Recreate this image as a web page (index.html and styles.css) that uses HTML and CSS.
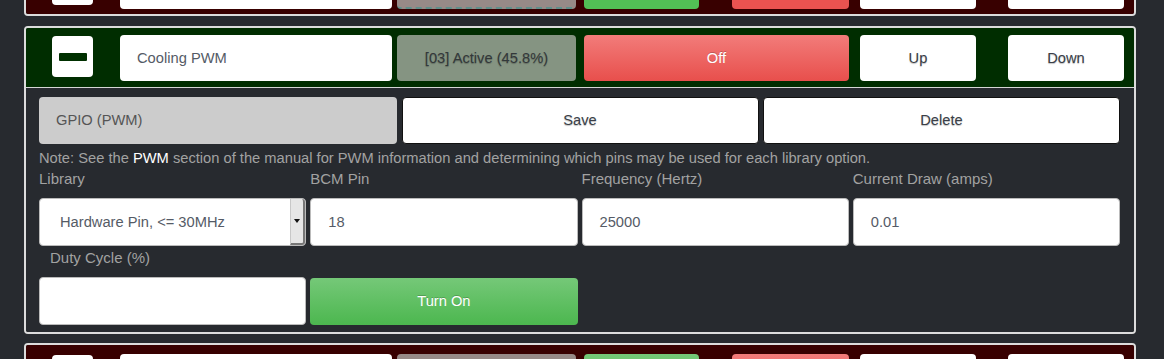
FILE: index.html
```html
<!DOCTYPE html>
<html>
<head>
<meta charset="utf-8">
<link rel="stylesheet" href="styles.css">
</head>
<body>
<div class="list">
  <div class="panel panel-off">
    <div class="head">
      <div class="tog"><span class="bar"></span></div>
      <div class="name"></div>
      <div class="status status-off"></div>
      <div class="btn btn-on-s"></div>
      <div class="btn btn-red-s"></div>
      <div class="btn btn-white up"></div>
      <div class="btn btn-white down"></div>
    </div>
  </div>

  <div class="panel panel-on">
    <div class="head">
      <div class="tog"><span class="bar"></span></div>
      <div class="name">Cooling PWM</div>
      <div class="status status-on">[03] Active (45.8%)</div>
      <div class="btn btn-red off">Off</div>
      <div class="btn btn-white up">Up</div>
      <div class="btn btn-white down">Down</div>
    </div>
    <div class="body">
      <div class="row3">
        <div class="type">GPIO (PWM)</div>
        <div class="btn btn-white bordered">Save</div>
        <div class="btn btn-white bordered">Delete</div>
      </div>
      <div class="note">Note: See the <span class="link">PWM</span> section of the manual for PWM information and determining which pins may be used for each library option.</div>
      <div class="row4 labels">
        <div>Library</div>
        <div>BCM Pin</div>
        <div>Frequency (Hertz)</div>
        <div>Current Draw (amps)</div>
      </div>
      <div class="row4 inputs">
        <div class="field select">Hardware Pin, &lt;= 30MHz<span class="arrow"><span class="tri"></span></span></div>
        <div class="field">18</div>
        <div class="field">25000</div>
        <div class="field">0.01</div>
      </div>
      <div class="duty-label">Duty Cycle (%)</div>
      <div class="row4 inputs duty">
        <div class="field"></div>
        <div class="btn btn-green">Turn On</div>
      </div>
    </div>
  </div>

  <div class="panel panel-off last">
    <div class="head">
      <div class="tog"><span class="bar"></span></div>
      <div class="name"></div>
      <div class="status status-off"></div>
      <div class="btn btn-on-s btn-on-light"></div>
      <div class="btn btn-red-s btn-red-light"></div>
      <div class="btn btn-white up"></div>
      <div class="btn btn-white down"></div>
    </div>
  </div>
</div>
</body>
</html>
```

FILE: styles.css
```css
html, body {
  margin: 0;
  padding: 0;
  background: #272a2f;
  font-family: "Liberation Sans", Arial, sans-serif;
  font-size: 14.7px;
  overflow: hidden;
  height: 359px;
}

.list {
  width: 1112px;
  margin-left: 24px;
  margin-top: -48px;
  display: flex;
  flex-direction: column;
  gap: 10px;
}

.panel {
  border: 2px solid #dcdcdc;
  border-radius: 4px;
  overflow: hidden;
}

.panel.last {
  margin-top: -1px;
}

.head {
  height: 60px;
  display: flex;
  align-items: flex-start;
  padding-top: 7px;
  box-sizing: border-box;
}

.panel-on .head {
  background: #002d00;
  border-bottom: 1px solid #d6d6d6;
}

.panel-off .head {
  background: #380000;
  padding-top: 9px;
}

.tog {
  width: 41px;
  height: 41px;
  margin-left: 26px;
  margin-top: 1px;
  background: #fff;
  border-radius: 4px;
  display: flex;
  align-items: center;
  justify-content: center;
}

.tog .bar {
  width: 28px;
  height: 8px;
  background: #003000;
  border-radius: 1px;
}

.name {
  width: 272px;
  height: 46px;
  margin-left: 27px;
  background: #fff;
  border-radius: 4px;
  box-sizing: border-box;
  padding-left: 17px;
  line-height: 46px;
  color: #555b66;
}

.status {
  width: 179px;
  height: 46px;
  margin-left: 5px;
  border-radius: 4px;
  box-sizing: border-box;
  text-align: center;
  line-height: 46px;
  color: #33383a;
  text-shadow: 0 1px 1px rgba(0,0,0,0.25);
}

.status-on {
  background: #859482;
}

.status-off {
  background: #978a87;
  border-bottom: 2px dashed #5f8f8a;
}

.btn {
  height: 46px;
  border-radius: 4px;
  box-sizing: border-box;
  text-align: center;
  line-height: 46px;
}

.btn-red {
  width: 265px;
  margin-left: 8px;
  color: #fff;
  background: linear-gradient(#f27c7a, #e84f4c);
  text-shadow: 0 -1px 0 rgba(0,0,0,0.2);
}

.btn-on-s {
  width: 115px;
  margin-left: 8px;
  background: #52bf55;
}

.btn-on-light {
  background: linear-gradient(#75c878, #4cb74f);
}

.btn-red-s {
  width: 117px;
  margin-left: 33px;
  background: #ea5350;
}

.btn-red-light {
  background: linear-gradient(#f27c7a, #e84f4c);
}

.btn-white {
  background: #fff;
  color: #3a3f48;
  text-shadow: 0 1px 1px rgba(0,0,0,0.25);
}

.up {
  width: 116px;
  margin-left: 11px;
}

.down {
  width: 116px;
  margin-left: 32px;
}

.body {
  background: #272a2f;
  padding: 9px 14px 7px 13px;
}

.row3 {
  display: grid;
  grid-template-columns: 358px 357px 357px;
  column-gap: 4.5px;
  height: 47px;
}

.row3 .btn {
  height: 47px;
  line-height: 45px;
}

.bordered {
  border: 1px solid #111;
}

.type {
  background: #cccccc;
  border-radius: 4px;
  color: #555;
  line-height: 47px;
  padding-left: 17px;
}

.note {
  color: #a2a2a2;
  line-height: 20px;
  margin-top: 4px;
  white-space: nowrap;
}

.note .link {
  color: #fff;
}

.row4 {
  display: grid;
  grid-template-columns: repeat(4, 1fr);
  column-gap: 4px;
}

.labels {
  color: #a2a2a2;
  font-size: 15px;
  line-height: 20px;
  margin-top: 1px;
}

.inputs {
  margin-top: 9px;
  height: 48px;
}

.field {
  position: relative;
  background: #fff;
  border: 1px solid #bbb;
  border-radius: 4px;
  box-sizing: border-box;
  height: 48px;
  line-height: 46px;
  padding-left: 17px;
  color: #555b66;
}

.select {
  padding-left: 20px;
}

.select .arrow {
  position: absolute;
  right: 0;
  top: 0;
  bottom: 0;
  width: 12px;
  background: #e6e6e6;
  border-left: 1px solid #c8c8c8;
  border-right: 2px solid #777;
  border-bottom: 2px solid #777;
  border-radius: 0 3px 3px 0;
  display: flex;
  align-items: center;
  justify-content: center;
}

.select .tri {
  width: 0;
  height: 0;
  border-left: 3px solid transparent;
  border-right: 3px solid transparent;
  border-top: 4px solid #111;
}

.duty-label {
  color: #a2a2a2;
  font-size: 15px;
  line-height: 20px;
  padding-left: 11px;
  margin-top: 2px;
}

.inputs.duty {
  margin-top: 9px;
  height: 48px;
}

.btn-green {
  height: 47px;
  margin-top: 1px;
  line-height: 47px;
  color: #fff;
  background: linear-gradient(#75c878, #4cb74f);
  text-shadow: 0 -1px 0 rgba(0,0,0,0.2);
  border-radius: 4px;
}
```
